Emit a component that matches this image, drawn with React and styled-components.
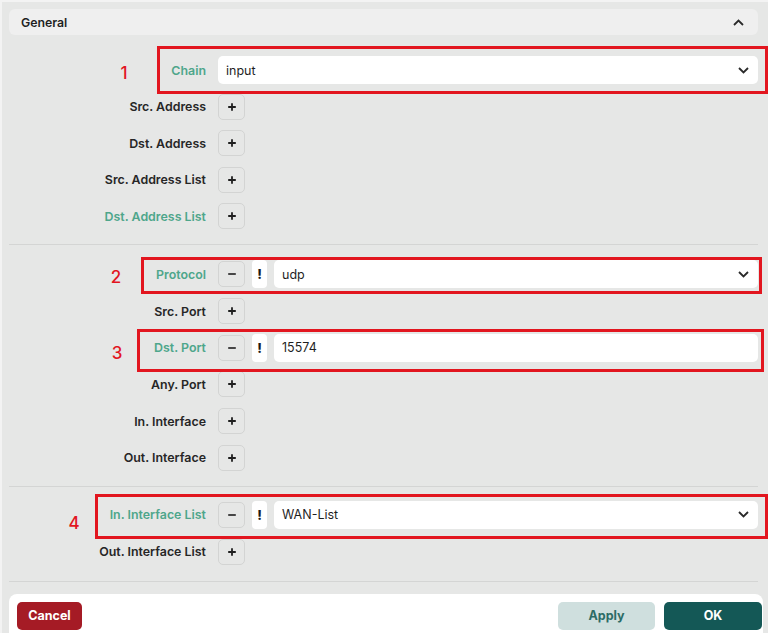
import React from "react";
import styled, { createGlobalStyle } from "styled-components";

const Global = createGlobalStyle`
  html, body { margin: 0; padding: 0; }
  body {
    background: #e6e7e6;
    font-family: Inter, "Noto Sans", "Liberation Sans", sans-serif;
    color: #262626;
  }
  * { box-sizing: border-box; }
`;

const Page = styled.div`
  position: relative;
  width: 768px;
  height: 633px;
  overflow: hidden;
  background: #e6e7e6;
  border-top: 2px solid #f3f3f3;
  border-left: 2px solid #f3f3f3;
  display: flex;
  flex-direction: column;
`;

const Header = styled.div`
  margin: 7px 10px 0 7px;
  height: 26px;
  background: #efefef;
  border-radius: 6px;
  padding: 0 14px 0 12px;
  display: flex;
  align-items: center;
  justify-content: space-between;
  font-size: 12.3px;
  font-weight: 600;
  color: #1f1f1f;
`;

const Section = styled.div`
  margin: 0 10px 0 7px;
  padding: ${(p) => p.$top}px 0 ${(p) => p.$bottom}px 0;
  border-bottom: 1px solid #d4d5d4;
  display: flex;
  flex-direction: column;
  gap: ${(p) => p.$gap}px;
`;

const Row = styled.div`
  display: grid;
  grid-template-columns: 197px 1fr;
  column-gap: 12px;
  align-items: center;
  height: 28px;
`;

const Label = styled.div`
  text-align: right;
  font-size: 12.4px;
  font-weight: 600;
  color: ${(p) => (p.$active ? "#4ea68b" : "#262626")};
  white-space: nowrap;
`;

const Controls = styled.div`
  display: flex;
  align-items: center;
  gap: 7px;
  height: 28px;
`;

const IconButton = styled.div`
  width: 27px;
  height: 26px;
  border: 1px solid #d3d4d3;
  border-radius: 5px;
  background: #e6e7e6;
  display: flex;
  align-items: center;
  justify-content: center;
  flex: none;
`;

const Bang = styled.div`
  width: 15px;
  height: 28px;
  border-radius: 4px;
  background: #ffffff;
  display: flex;
  align-items: center;
  justify-content: center;
  font-size: 13px;
  font-weight: 800;
  color: #1a1a1a;
  flex: none;
`;

const Field = styled.div`
  flex: 1;
  height: 28px;
  background: #ffffff;
  border-radius: 5px;
  padding: 0 9px 0 8px;
  display: flex;
  align-items: center;
  justify-content: space-between;
  font-size: 12.5px;
  font-weight: 400;
  color: #1f1f1f;
`;

const Footer = styled.div`
  margin: 12px 5px 0 7px;
  flex: 1;
  background: #ffffff;
  border-radius: 8px 8px 0 0;
  padding: 8px 1px 0 8px;
  display: flex;
  align-items: flex-start;
  justify-content: space-between;
`;

const Btn = styled.button`
  height: 28px;
  width: ${(p) => p.$w}px;
  border: none;
  border-radius: 5px;
  background: ${(p) => p.$bg};
  color: ${(p) => p.$fg};
  font-family: inherit;
  font-size: 12.5px;
  font-weight: 700;
  padding: 0;
`;

const BtnGroup = styled.div`
  display: flex;
  gap: 9px;
`;

const Annot = styled.div`
  position: absolute;
  border: 3px solid #e2161f;
  pointer-events: none;
`;

const Num = styled.div`
  position: absolute;
  font-size: 17px;
  font-weight: 500;
  color: #e2161f;
  line-height: 1;
  transform: translate(-50%, -50%);
`;

const Plus = () => (
  <svg width="10" height="10" viewBox="0 0 10 10">
    <path d="M5 1.2v7.6M1.2 5h7.6" stroke="#1f1f1f" strokeWidth="1.8" />
  </svg>
);

const Minus = () => (
  <svg width="10" height="10" viewBox="0 0 10 10">
    <path d="M1.2 5h7.6" stroke="#1f1f1f" strokeWidth="1.6" />
  </svg>
);

const ChevronDown = () => (
  <svg width="11" height="7" viewBox="0 0 11 7">
    <path d="M1 1l4.5 4.5L10 1" fill="none" stroke="#2a2a2a" strokeWidth="1.8" />
  </svg>
);

const ChevronUp = () => (
  <svg width="11" height="7" viewBox="0 0 11 7">
    <path d="M1 6l4.5-4.5L10 6" fill="none" stroke="#2a2a2a" strokeWidth="1.8" />
  </svg>
);

const AddRow = ({ label, active }) => (
  <Row>
    <Label $active={active}>{label}</Label>
    <Controls>
      <IconButton>
        <Plus />
      </IconButton>
    </Controls>
  </Row>
);

const NegRow = ({ label, value, select }) => (
  <Row>
    <Label $active>{label}</Label>
    <Controls>
      <IconButton>
        <Minus />
      </IconButton>
      <Bang>!</Bang>
      <Field>
        <span>{value}</span>
        {select && <ChevronDown />}
      </Field>
    </Controls>
  </Row>
);

export default function App() {
  return (
    <>
      <Global />
      <Page>
        <Header>
          <span>General</span>
          <ChevronUp />
        </Header>

        <Section $top={21} $bottom={14} $gap={8.6}>
          <Row>
            <Label $active>Chain</Label>
            <Controls>
              <Field>
                <span>input</span>
                <ChevronDown />
              </Field>
            </Controls>
          </Row>
          <AddRow label="Src. Address" />
          <AddRow label="Dst. Address" />
          <AddRow label="Src. Address List" />
          <AddRow label="Dst. Address List" active />
        </Section>

        <Section $top={15} $bottom={14} $gap={8.7}>
          <NegRow label="Protocol" value="udp" select />
          <AddRow label="Src. Port" />
          <NegRow label="Dst. Port" value="15574" />
          <AddRow label="Any. Port" />
          <AddRow label="In. Interface" />
          <AddRow label="Out. Interface" />
        </Section>

        <Section $top={14} $bottom={15} $gap={9}>
          <NegRow label="In. Interface List" value="WAN-List" select />
          <AddRow label="Out. Interface List" />
        </Section>

        <Footer>
          <Btn $w={65} $bg="#a51b25" $fg="#ffffff">
            Cancel
          </Btn>
          <BtnGroup>
            <Btn $w={97} $bg="#cfdfde" $fg="#2c6c66">
              Apply
            </Btn>
            <Btn $w={98} $bg="#145856" $fg="#ffffff">
              OK
            </Btn>
          </BtnGroup>
        </Footer>

        <Annot style={{ left: 155, top: 44, width: 611, height: 48 }} />
        <Annot style={{ left: 139, top: 255, width: 621, height: 37 }} />
        <Annot style={{ left: 135, top: 327, width: 627, height: 43 }} />
        <Annot style={{ left: 93, top: 492, width: 673, height: 45 }} />
        <Num style={{ left: 122, top: 71 }}>1</Num>
        <Num style={{ left: 114, top: 275 }}>2</Num>
        <Num style={{ left: 115, top: 351 }}>3</Num>
        <Num style={{ left: 72, top: 521 }}>4</Num>
      </Page>
    </>
  );
}
